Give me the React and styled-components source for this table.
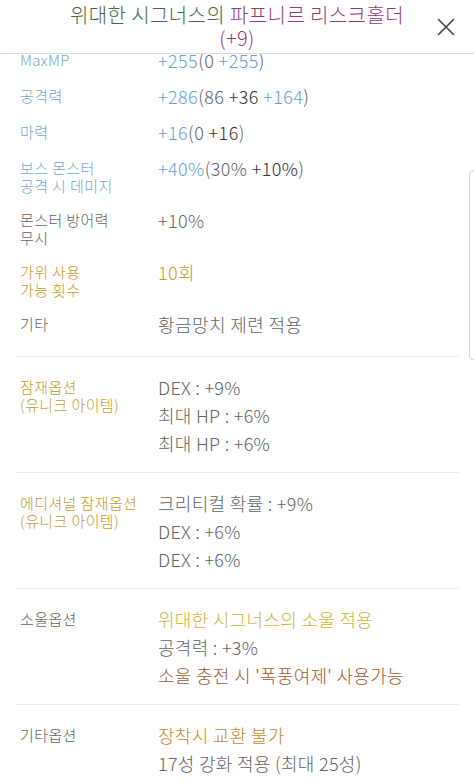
import React from "react";
import styled, { createGlobalStyle } from "styled-components";

const GlobalStyle = createGlobalStyle`
  html, body { margin: 0; padding: 0; background: #fff; }
  body {
    font-family: "Noto Sans CJK KR", "Noto Sans", sans-serif;
    -webkit-font-smoothing: antialiased;
  }
  * { box-sizing: border-box; }
`;

const tones = {
  blue: "#68a3cb",
  label: "#74a7c6",
  dark: "#333333",
  gray: "#636363",
  gold: "#bf9c28",
  yellow: "#cfb430",
  brown: "#a15a30",
  orange: "#c48a24",
  green: "#46684d",
  purple: "#8e3c71",
};

const Page = styled.div`
  position: relative;
  width: 474px;
  height: 783px;
  overflow: hidden;
  display: flex;
  flex-direction: column;
  background: #fff;
`;

const Header = styled.header`
  flex: 0 0 auto;
  height: 54px;
  display: grid;
  grid-template-columns: 60px 1fr 60px;
  align-items: start;
  border-bottom: 1px solid #dcdcdc;
  background: #fff;
`;

const Title = styled.h1`
  grid-column: 2;
  margin: 0;
  padding-top: 3px;
  text-align: center;
  font-size: 20px;
  line-height: 23px;
  font-weight: 300;
  letter-spacing: 0.4px;
`;

const Tone = styled.span`
  color: ${(p) => tones[p.$tone] || tones.gray};
`;

const CloseButton = styled.button`
  grid-column: 3;
  justify-self: start;
  align-self: center;
  margin-left: 23px;
  margin-top: 1px;
  width: 18px;
  height: 18px;
  padding: 0;
  border: 0;
  background: none;
  display: flex;
  align-items: center;
  justify-content: center;
  color: #444;
`;

const Body = styled.main`
  flex: 1 1 auto;
  overflow: hidden;
`;

const List = styled.div`
  margin-top: -12px;
`;

const StatGroup = styled.div`
  padding-bottom: 14px;
`;

const StatRow = styled.div`
  display: grid;
  grid-template-columns: 138px 1fr;
  padding: 7px 0 7px 20px;
`;

const StatLabel = styled.div`
  padding-top: 2px;
  font-size: 15px;
  line-height: 18px;
  font-weight: 300;
  letter-spacing: 0.4px;
  color: ${(p) => tones[p.$tone] || tones.gray};
`;

const StatValue = styled.div`
  font-size: 18px;
  line-height: 22px;
  font-weight: 300;
  letter-spacing: 0.4px;
  white-space: nowrap;
`;

const Section = styled.section`
  display: grid;
  grid-template-columns: 138px 1fr;
  margin: 0 15px 0 16px;
  padding: 16px 0 15px 4px;
  border-top: 1px solid #ececec;
`;

const SectionLabel = styled.div`
  padding-top: 5px;
  font-size: 15px;
  line-height: 18px;
  font-weight: 300;
  letter-spacing: 0.4px;
  color: ${(p) => tones[p.$tone] || tones.gray};
`;

const Lines = styled.div`
  display: flex;
  flex-direction: column;
`;

const Line = styled.div`
  font-size: 18px;
  line-height: 28px;
  font-weight: 300;
  letter-spacing: 0.3px;
  white-space: nowrap;
  color: ${(p) => tones[p.$tone] || tones.gray};
`;

const ScrollThumb = styled.div`
  position: absolute;
  top: 170px;
  right: -3px;
  width: 8px;
  height: 190px;
  border: 1px solid #d2d2d2;
  border-radius: 4px;
  background: #fff;
`;

const stats = [
  {
    label: ["MaxMP"],
    tone: "label",
    value: [["+255", "blue"], ["(0 ", "gray"], ["+255", "blue"], [")", "gray"]],
  },
  {
    label: ["공격력"],
    tone: "label",
    value: [["+286", "blue"], ["(86 ", "gray"], ["+36 ", "dark"], ["+164", "blue"], [")", "gray"]],
  },
  {
    label: ["마력"],
    tone: "label",
    value: [["+16", "blue"], ["(0 ", "gray"], ["+16", "dark"], [")", "gray"]],
  },
  {
    label: ["보스 몬스터", "공격 시 데미지"],
    tone: "label",
    value: [["+40%", "blue"], ["(30% ", "gray"], ["+10%", "dark"], [")", "gray"]],
  },
  {
    label: ["몬스터 방어력", "무시"],
    tone: "gray",
    value: [["+10%", "gray"]],
  },
  {
    label: ["가위 사용", "가능 횟수"],
    tone: "gold",
    value: [["10회", "gold"]],
  },
  {
    label: ["기타"],
    tone: "gray",
    value: [["황금망치 제련 적용", "gray"]],
  },
];

const sections = [
  {
    label: ["잠재옵션", "(유니크 아이템)"],
    tone: "gold",
    lines: [["DEX : +9%"], ["최대 HP : +6%"], ["최대 HP : +6%"]],
  },
  {
    label: ["에디셔널 잠재옵션", "(유니크 아이템)"],
    tone: "gold",
    lines: [["크리티컬 확률 : +9%"], ["DEX : +6%"], ["DEX : +6%"]],
  },
  {
    label: ["소울옵션"],
    tone: "gray",
    lines: [
      ["위대한 시그너스의 소울 적용", "yellow"],
      ["공격력 : +3%"],
      ["소울 충전 시 '폭풍여제' 사용가능", "brown"],
    ],
  },
  {
    label: ["기타옵션"],
    tone: "gray",
    lines: [["장착시 교환 불가", "orange"], ["17성 강화 적용 (최대 25성)"]],
  },
];

const MultiLine = ({ parts }) =>
  parts.map((t, i) => (
    <React.Fragment key={i}>
      {i > 0 && <br />}
      {t}
    </React.Fragment>
  ));

export default function App() {
  return (
    <>
      <GlobalStyle />
      <Page>
        <Header>
          <Title>
            <Tone $tone="green">위대한 시그너스의 </Tone>
            <Tone $tone="purple">파프니르 리스크홀더 (+9)</Tone>
          </Title>
          <CloseButton aria-label="닫기">
            <svg width="18" height="18" viewBox="0 0 18 18">
              <path
                d="M1.5 1.5 L16.5 16.5 M16.5 1.5 L1.5 16.5"
                stroke="currentColor"
                strokeWidth="1.6"
                strokeLinecap="round"
                fill="none"
              />
            </svg>
          </CloseButton>
        </Header>
        <Body>
          <List>
            <StatGroup>
              {stats.map((s, i) => (
                <StatRow key={i}>
                  <StatLabel $tone={s.tone}>
                    <MultiLine parts={s.label} />
                  </StatLabel>
                  <StatValue>
                    {s.value.map(([t, tone], j) => (
                      <Tone key={j} $tone={tone}>
                        {t}
                      </Tone>
                    ))}
                  </StatValue>
                </StatRow>
              ))}
            </StatGroup>
            {sections.map((s, i) => (
              <Section key={i}>
                <SectionLabel $tone={s.tone}>
                  <MultiLine parts={s.label} />
                </SectionLabel>
                <Lines>
                  {s.lines.map(([t, tone], j) => (
                    <Line key={j} $tone={tone || "gray"}>
                      {t}
                    </Line>
                  ))}
                </Lines>
              </Section>
            ))}
          </List>
        </Body>
        <ScrollThumb />
      </Page>
    </>
  );
}
